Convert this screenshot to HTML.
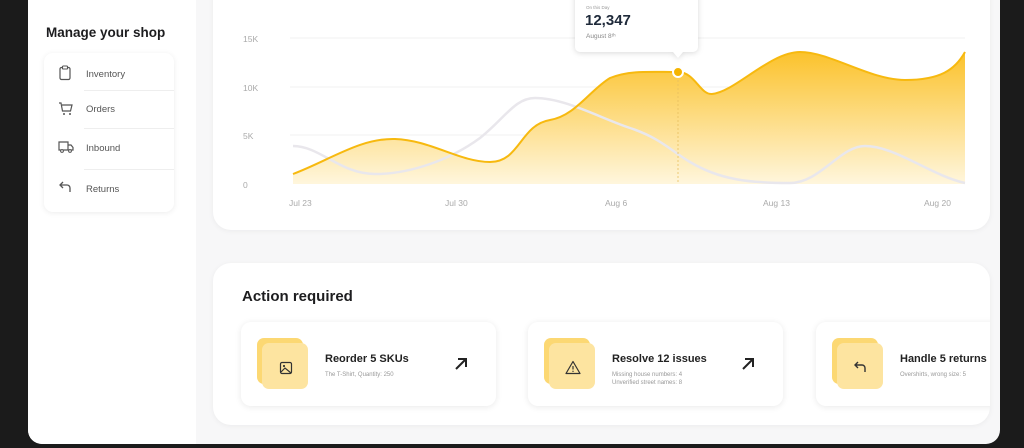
<!DOCTYPE html>
<html><head><meta charset="utf-8"><style>
*{margin:0;padding:0;box-sizing:border-box}
body{width:1024px;height:448px;background:#1b1b1b;font-family:"Liberation Sans",sans-serif;overflow:hidden;position:relative}
.panel{position:absolute;left:28px;top:-20px;width:972px;height:464px;background:#f7f7f8;border-radius:14px;overflow:hidden}
.side{position:absolute;left:0;top:0;width:168px;height:100%;background:#fff}
.h{position:absolute;left:18px;top:45px;font-size:13.5px;font-weight:bold;color:#1d1d1f}
.menu{position:absolute;left:16px;top:73px;width:130px;height:159px;background:#fff;border-radius:9px;box-shadow:0 1px 6px rgba(0,0,0,.08)}
.mi{position:absolute;left:42px;font-size:9.5px;color:#555}
.sep{position:absolute;left:40px;right:0;height:1px;background:#eee}
.ic{position:absolute;left:14px}
.card{position:absolute;background:#fff;border-radius:18px;box-shadow:0 1px 6px rgba(0,0,0,.05)}
.ax{position:absolute;font-size:8.5px;color:#aaa}
.ac{position:absolute;top:342px;height:84px;background:#fff;border-radius:10px;box-shadow:0 1px 7px rgba(0,0,0,.09)}
.sq1{position:absolute;left:16px;top:16px;width:46px;height:46px;border-radius:7px;background:#fcd873}
.sq2{position:absolute;left:21px;top:21px;width:46px;height:46px;border-radius:7px;background:#fde4a0}
.t{position:absolute;left:84px;top:31px;font-size:11px;font-weight:bold;color:#222}
.s{position:absolute;left:84px;top:49px;font-size:6px;color:#999;line-height:8px}
.arr{position:absolute;left:212px;top:34px}
</style></head><body>
<div class="panel">
 <div class="side">
  <div class="h">Manage your shop</div>
  <div class="menu">
   <svg class="ic" style="top:12px" width="14" height="16" viewBox="0 0 14 16"><rect x="2" y="2.5" width="10" height="12" rx="1.5" fill="none" stroke="#555" stroke-width="1.2"/><rect x="4.5" y="1" width="5" height="3" rx=".8" fill="#fff" stroke="#555" stroke-width="1.1"/></svg>
   <div class="mi" style="top:16px">Inventory</div>
   <div class="sep" style="top:37px"></div>
   <svg class="ic" style="top:48px" width="16" height="16" viewBox="0 0 16 16"><path d="M1 2h2l1.5 8h8l1.5-6H4" fill="none" stroke="#555" stroke-width="1.2"/><circle cx="6" cy="13" r="1" fill="#555"/><circle cx="12" cy="13" r="1" fill="#555"/></svg>
   <div class="mi" style="top:51px">Orders</div>
   <div class="sep" style="top:75px"></div>
   <svg class="ic" style="top:87px" width="16" height="14" viewBox="0 0 16 14"><path d="M1 2h9v8H1zM10 5h3l2 2.5V10h-5" fill="none" stroke="#555" stroke-width="1.2"/><circle cx="4" cy="11" r="1.4" fill="#fff" stroke="#555"/><circle cx="12" cy="11" r="1.4" fill="#fff" stroke="#555"/></svg>
   <div class="mi" style="top:90px">Inbound</div>
   <div class="sep" style="top:116px"></div>
   <svg class="ic" style="top:127px" width="16" height="14" viewBox="0 0 16 14"><path d="M5 2L2 5l3 3M2 5h7a3 3 0 0 1 3 3v4" fill="none" stroke="#555" stroke-width="1.3"/></svg>
   <div class="mi" style="top:131px">Returns</div>
  </div>
 </div>
 <div class="card" style="left:185px;top:0;width:777px;height:250px"></div>
 <div class="card" style="left:185px;top:283px;width:777px;height:162px;overflow:hidden">
  <div style="position:absolute;left:29px;top:25px;font-size:15px;font-weight:bold;color:#1d1d1f">Action required</div>
 </div>
</div>
<div class="ax" style="left:243px;top:34px">15K</div>
<div class="ax" style="left:243px;top:83px">10K</div>
<div class="ax" style="left:243px;top:131px">5K</div>
<div class="ax" style="left:243px;top:180px">0</div>
<div class="ax" style="left:289px;top:198px">Jul 23</div>
<div class="ax" style="left:445px;top:198px">Jul 30</div>
<div class="ax" style="left:605px;top:198px">Aug 6</div>
<div class="ax" style="left:763px;top:198px">Aug 13</div>
<div class="ax" style="left:924px;top:198px">Aug 20</div>
<svg style="position:absolute;left:0;top:0" width="1024" height="230">
 <defs><linearGradient id="g" x1="0" y1="0" x2="0" y2="1"><stop offset="0" stop-color="#fbc22b"/><stop offset="1" stop-color="#fff6dd"/></linearGradient></defs>
 <g stroke="#f0f0f0" stroke-width="1"><line x1="290" y1="38" x2="965" y2="38"/><line x1="290" y1="87" x2="965" y2="87"/><line x1="290" y1="135" x2="965" y2="135"/></g>
 <path d="M293 174C330 160 360 138 395 139C430 140 460 162 490 162C520 162 520 125 550 120C575 116 590 90 610 78C630 70 650 72 678 72C695 72 700 95 712 94C735 92 770 52 800 52C830 52 870 80 905 80C940 80 955 70 965 52L965 184H293Z" fill="url(#g)"/>
 <path d="M293 146C320 146 340 174 375 174C410 174 450 160 480 138C505 118 515 98 535 98C565 98 600 118 630 128C660 138 670 150 690 162C720 180 750 183 790 183C820 183 840 146 865 146C895 146 930 175 965 183" fill="none" stroke="#e9e7ec" stroke-width="2.5"/>
 <path d="M293 174C330 160 360 138 395 139C430 140 460 162 490 162C520 162 520 125 550 120C575 116 590 90 610 78C630 70 650 72 678 72C695 72 700 95 712 94C735 92 770 52 800 52C830 52 870 80 905 80C940 80 955 70 965 52" fill="none" stroke="#f7b90f" stroke-width="2"/>
 <line x1="678" y1="76" x2="678" y2="184" stroke="#e8c060" stroke-dasharray="2 2" stroke-width=".8"/>
 <circle cx="678" cy="72" r="5" fill="#f5b400" stroke="#fff" stroke-width="2"/>
 <path d="M580 -10h113a5 5 0 0 1 5 5v52a5 5 0 0 1-5 5h-10l-5 6-5-6h-93a5 5 0 0 1-5-5v-52a5 5 0 0 1 5-5z" fill="#fff" style="filter:drop-shadow(0 1px 3px rgba(0,0,0,.15))"/>
</svg>
<div style="position:absolute;left:586px;top:5px;font-size:4.5px;color:#999">On this Day</div>
<div style="position:absolute;left:585px;top:12px;font-size:15px;font-weight:bold;color:#1f2a3a">12,347</div>
<div style="position:absolute;left:586px;top:33px;font-size:6.5px;color:#888">August 8ᵗʰ</div>
<div style="position:absolute;left:213px;top:263px;width:777px;height:162px;overflow:hidden">
 <div class="ac" style="left:28px;top:59px;width:255px"><div class="sq1"></div><div class="sq2"></div>
  <svg style="position:absolute;left:38px;top:39px" width="14" height="14" viewBox="0 0 14 14"><rect x="1.5" y="1.5" width="11" height="11" rx="1.5" fill="none" stroke="#333" stroke-width="1.2"/><circle cx="5" cy="5" r="1.1" fill="#333"/><path d="M2 11l4-4 6 5" fill="none" stroke="#333" stroke-width="1.2"/></svg>
  <div class="t">Reorder 5 SKUs</div><div class="s">The T-Shirt, Quantity: 250</div>
  <svg class="arr" width="16" height="16" viewBox="0 0 16 16"><path d="M3 13L13 3M5 3h8v8" fill="none" stroke="#222" stroke-width="2"/></svg></div>
 <div class="ac" style="left:315px;top:59px;width:255px"><div class="sq1"></div><div class="sq2"></div>
  <svg style="position:absolute;left:37px;top:38px" width="16" height="15" viewBox="0 0 16 15"><path d="M8 1.5L15 13.5H1z" fill="none" stroke="#333" stroke-width="1.2" stroke-linejoin="round"/><path d="M8 6v3.5" stroke="#333" stroke-width="1.2"/><circle cx="8" cy="11.3" r=".7" fill="#333"/></svg>
  <div class="t">Resolve 12 issues</div><div class="s">Missing house numbers: 4<br>Unverified street names: 8</div>
  <svg class="arr" width="16" height="16" viewBox="0 0 16 16"><path d="M3 13L13 3M5 3h8v8" fill="none" stroke="#222" stroke-width="2"/></svg></div>
 <div class="ac" style="left:603px;top:59px;width:255px"><div class="sq1"></div><div class="sq2"></div>
  <svg style="position:absolute;left:37px;top:38px" width="16" height="14" viewBox="0 0 16 14"><path d="M5 2L2 5l3 3M2 5h7a3 3 0 0 1 3 3v4" fill="none" stroke="#333" stroke-width="1.4"/></svg>
  <div class="t">Handle 5 returns</div><div class="s">Overshirts, wrong size: 5</div></div>
</div>
</body></html>
